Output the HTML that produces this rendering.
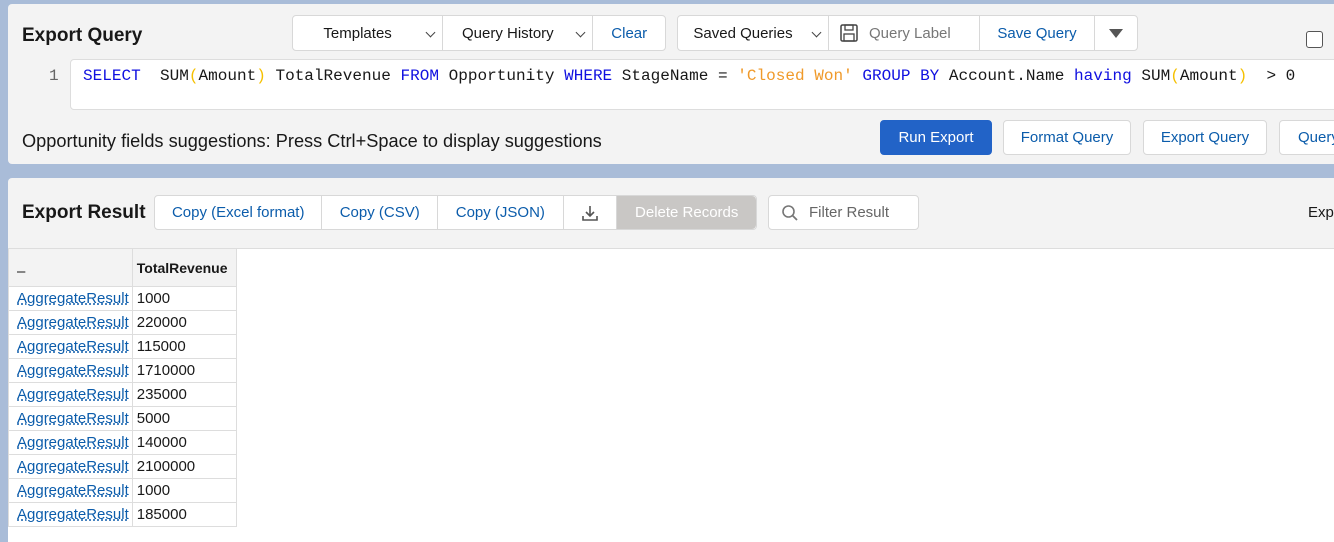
<!DOCTYPE html>
<html><head><meta charset="utf-8"><style>
*{box-sizing:border-box;margin:0;padding:0}
body{width:1334px;height:542px;overflow:hidden;background:#fff;font-family:"Liberation Sans",sans-serif;position:relative}
.bg{position:absolute;left:0;top:0;width:1334px;height:542px;background:#a9bcd8}
.card{position:absolute;background:#f3f3f3;border-radius:4px}
.abs{position:absolute}
.btn{position:absolute;background:#fff;border:1px solid #d8d8d8;border-radius:4px;font-size:15px;color:#0b5cab;display:flex;align-items:center;justify-content:center}
.grp{position:absolute;background:#fff;border:1px solid #d8d8d8;border-radius:4px;display:flex;height:36px}
.grp>div{display:flex;align-items:center;justify-content:center;border-right:1px solid #d8d8d8;font-size:15px;height:100%}
.grp>div:last-child{border-right:none}
.sel{color:#181818;position:relative}
.chev{position:absolute;right:8px;top:13px;width:7px;height:7px;border-right:1.3px solid #444;border-bottom:1.3px solid #444;transform:rotate(45deg)}
.blue{color:#0b5cab}
.code{font-family:"Liberation Mono",monospace;font-size:16.05px;color:#181818;white-space:pre}
.k{color:#1010e0}.s{color:#f09a2a}.p{color:#f5c000}
table{border-collapse:collapse;position:absolute;left:8px;top:248px;font-size:15px}
td{border:1px solid #ddd;height:24px;padding:0 4px;color:#181818}
td:first-child{padding-left:8px;padding-right:3px}
td a{color:#0b5cab;text-decoration:underline dotted}
</style></head><body>
<div class="bg"></div>
<div class="card" style="left:8px;top:4px;width:1330px;height:160px"></div>
<div class="abs" style="left:22px;top:25px;font-size:19px;font-weight:bold;color:#181818">Export Query</div>
<div class="grp" style="left:292px;top:15px;width:374px">
 <div class="sel" style="width:151px;padding-right:20px">Templates<span class="chev"></span></div>
 <div class="sel" style="width:151px;padding-right:20px">Query History<span class="chev"></span></div>
 <div class="blue" style="width:72px">Clear</div>
</div>
<div class="grp" style="left:677px;top:15px;width:461px">
 <div class="sel" style="width:151px;padding-right:20px">Saved Queries<span class="chev"></span></div>
 <div style="width:151px;color:#777;justify-content:flex-start;padding-left:10px"><svg width="20" height="20" viewBox="0 0 20 20" style="margin-right:10px"><rect x="2" y="2" width="16" height="16" rx="1.5" fill="none" stroke="#444" stroke-width="1.5"/><rect x="6" y="2" width="8" height="5" fill="none" stroke="#444" stroke-width="1.3"/><rect x="5" y="11" width="10" height="7" fill="none" stroke="#444" stroke-width="1.3"/></svg>Query Label</div>
 <div class="blue" style="width:115px">Save Query</div>
 <div style="width:42px"><svg width="14" height="9"><path d="M0 0H14L7 9Z" fill="#555"/></svg></div>
</div>
<div class="abs" style="left:1306px;top:31px;width:17px;height:17px;border:1.3px solid #555;border-radius:3px;background:#fff"></div>
<div class="abs" style="left:70px;top:59px;width:1270px;height:51px;background:#fff;border:1px solid #ddd;border-radius:4px"></div>
<div class="abs code" style="left:49px;top:67px;color:#666">1</div>
<div class="abs code" style="left:83px;top:67px"><span class="k">SELECT</span>  SUM<span class="p">(</span>Amount<span class="p">)</span> TotalRevenue <span class="k">FROM</span> Opportunity <span class="k">WHERE</span> StageName = <span class="s">'Closed Won'</span> <span class="k">GROUP BY</span> Account.Name <span class="k">having</span> SUM<span class="p">(</span>Amount<span class="p">)</span>  > 0</div>
<div class="abs" style="left:22px;top:131px;font-size:18.2px;color:#181818">Opportunity fields suggestions: Press Ctrl+Space to display suggestions</div>
<div class="btn" style="left:880px;top:120px;width:112px;height:35px;background:#2263c7;border-color:#2263c7;color:#fff">Run Export</div>
<div class="btn" style="left:1003px;top:120px;width:128px;height:35px">Format Query</div>
<div class="btn" style="left:1143px;top:120px;width:124px;height:35px">Export Query</div>
<div class="btn" style="left:1279px;top:120px;width:80px;height:35px;justify-content:flex-start;padding-left:18px">Query</div>

<div class="card" style="left:8px;top:178px;width:1330px;height:70px;border-radius:4px 4px 0 0"></div>
<div class="abs" style="left:8px;top:248px;width:1330px;height:294px;background:#fff;border-top:1px solid #ddd"></div>
<div class="abs" style="left:22px;top:202px;font-size:19px;font-weight:bold;color:#181818">Export Result</div>
<div class="grp" style="left:154px;top:195px;width:603px;height:35px">
 <div class="blue" style="width:168px">Copy (Excel format)</div>
 <div class="blue" style="width:116px">Copy (CSV)</div>
 <div class="blue" style="width:126px">Copy (JSON)</div>
 <div style="width:54px"><svg width="18" height="18" viewBox="0 0 18 18"><path d="M9 2V12M5 8L9 12L13 8M2 12V16H16V12" fill="none" stroke="#555" stroke-width="1.6"/></svg></div>
 <div style="width:139px;background:#c9c7c5;color:#fff;border-radius:0 4px 4px 0">Delete Records</div>
</div>
<div class="btn" style="left:768px;top:195px;width:151px;height:35px;color:#666;justify-content:flex-start;padding-left:12px"><svg width="18" height="18" viewBox="0 0 18 18" style="margin-right:10px"><circle cx="7.5" cy="7.5" r="5.5" fill="none" stroke="#777" stroke-width="1.6"/><path d="M11.5 11.5L16 16" stroke="#777" stroke-width="1.8"/></svg>Filter Result</div>
<div class="abs" style="left:1308px;top:204px;font-size:15px;color:#181818">Exp</div>
<table>
<tr style="background:#f3f3f3"><td style="width:123px;height:38px;vertical-align:bottom;padding-bottom:6px">–</td><td style="width:104px;font-weight:bold;font-size:14px">TotalRevenue</td></tr>
<tr><td><a>AggregateResult</a></td><td>1000</td></tr>
<tr><td><a>AggregateResult</a></td><td>220000</td></tr>
<tr><td><a>AggregateResult</a></td><td>115000</td></tr>
<tr><td><a>AggregateResult</a></td><td>1710000</td></tr>
<tr><td><a>AggregateResult</a></td><td>235000</td></tr>
<tr><td><a>AggregateResult</a></td><td>5000</td></tr>
<tr><td><a>AggregateResult</a></td><td>140000</td></tr>
<tr><td><a>AggregateResult</a></td><td>2100000</td></tr>
<tr><td><a>AggregateResult</a></td><td>1000</td></tr>
<tr><td><a>AggregateResult</a></td><td>185000</td></tr>
</table>
</body></html>
